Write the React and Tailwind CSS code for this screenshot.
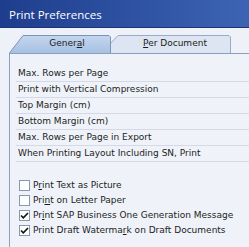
const rows = [
  'Max. Rows per Page',
  'Print with Vertical Compression',
  'Top Margin (cm)',
  'Bottom Margin (cm)',
  'Max. Rows per Page in Export',
  'When Printing Layout Including SN, Print',
]

const checks = [
  { pre: 'P', key: 'r', post: 'int Text as Picture', on: false },
  { pre: 'Pri', key: 'n', post: 't on Letter Paper', on: false },
  { pre: 'Pr', key: 'i', post: 'nt SAP Business One Generation Message', on: true },
  { pre: 'Print Draft Waterma', key: 'r', post: 'k on Draft Documents', on: true },
]

function Checkbox({ on }) {
  return (
    <span className="w-[11px] h-[11px] border border-[#8797ad] bg-white flex items-center justify-center shrink-0">
      {on && (
        <svg width="9" height="9" viewBox="0 0 9 9">
          <path d="M1 4.5 L3.3 6.8 L8 2" fill="none" stroke="#111" strokeWidth="1.6" />
        </svg>
      )}
    </span>
  )
}

export default function App() {
  return (
    <div className="w-[249px] h-[247px] overflow-hidden bg-[#eef2f8] font-['DejaVu_Sans',sans-serif] text-[9px] text-[#1c1c1c] whitespace-nowrap">
      <div className="h-[28px] bg-gradient-to-r from-[#1f3d8d] to-[#3d64b4] border-b border-[#1c3476] flex items-center pl-[9px] pt-[3px]">
        <span className="font-['Open_Sans',sans-serif] text-[11.5px] text-white">Print Preferences</span>
      </div>

      <div className="h-[25px] flex items-end pl-[9px]">
        <div className="relative z-10 w-[102px] h-[18px] flex items-center justify-center pl-[14px]">
          <svg className="absolute inset-0" width="102" height="18" viewBox="0 0 102 18">
            <defs>
              <linearGradient id="g1" x1="0" y1="0" x2="0" y2="1">
                <stop offset="0" stopColor="#c4d6ee" />
                <stop offset="1" stopColor="#a7c0e2" />
              </linearGradient>
            </defs>
            <path d="M0.5 18 L14 0.5 L100 0.5 L101.5 2 L101.5 18" fill="url(#g1)" stroke="#7d93b6" />
          </svg>
          <span className="relative">
            Gener<u>a</u>l
          </span>
        </div>
        <div className="relative -ml-[10px] w-[130px] h-[18px] flex items-center justify-center pl-[18px]">
          <svg className="absolute inset-0" width="130" height="18" viewBox="0 0 130 18">
            <path d="M0.5 18 L17 0.5 L128 0.5 L129.5 2 L129.5 18" fill="#dce5f1" stroke="#98abc8" />
          </svg>
          <span className="relative">
            <u>P</u>er Document
          </span>
        </div>
      </div>

      <div className="ml-[9px] border-t border-l border-[#8aa0bf] bg-[#eff3f9] pt-[12px] h-[200px]">
        <div className="pl-[6px]">
          {rows.map((r) => (
            <div key={r} className="h-[16px] border-b border-[#d3dae5] flex items-center pl-[2px]">
              {r}
            </div>
          ))}
        </div>
        <div className="mt-[16px] pl-[9px] flex flex-col">
          {checks.map((c, i) => (
            <div key={i} className="h-[15px] flex items-center gap-[3px]">
              <Checkbox on={c.on} />
              <span>
                {c.pre}
                <u>{c.key}</u>
                {c.post}
              </span>
            </div>
          ))}
        </div>
      </div>
    </div>
  )
}
